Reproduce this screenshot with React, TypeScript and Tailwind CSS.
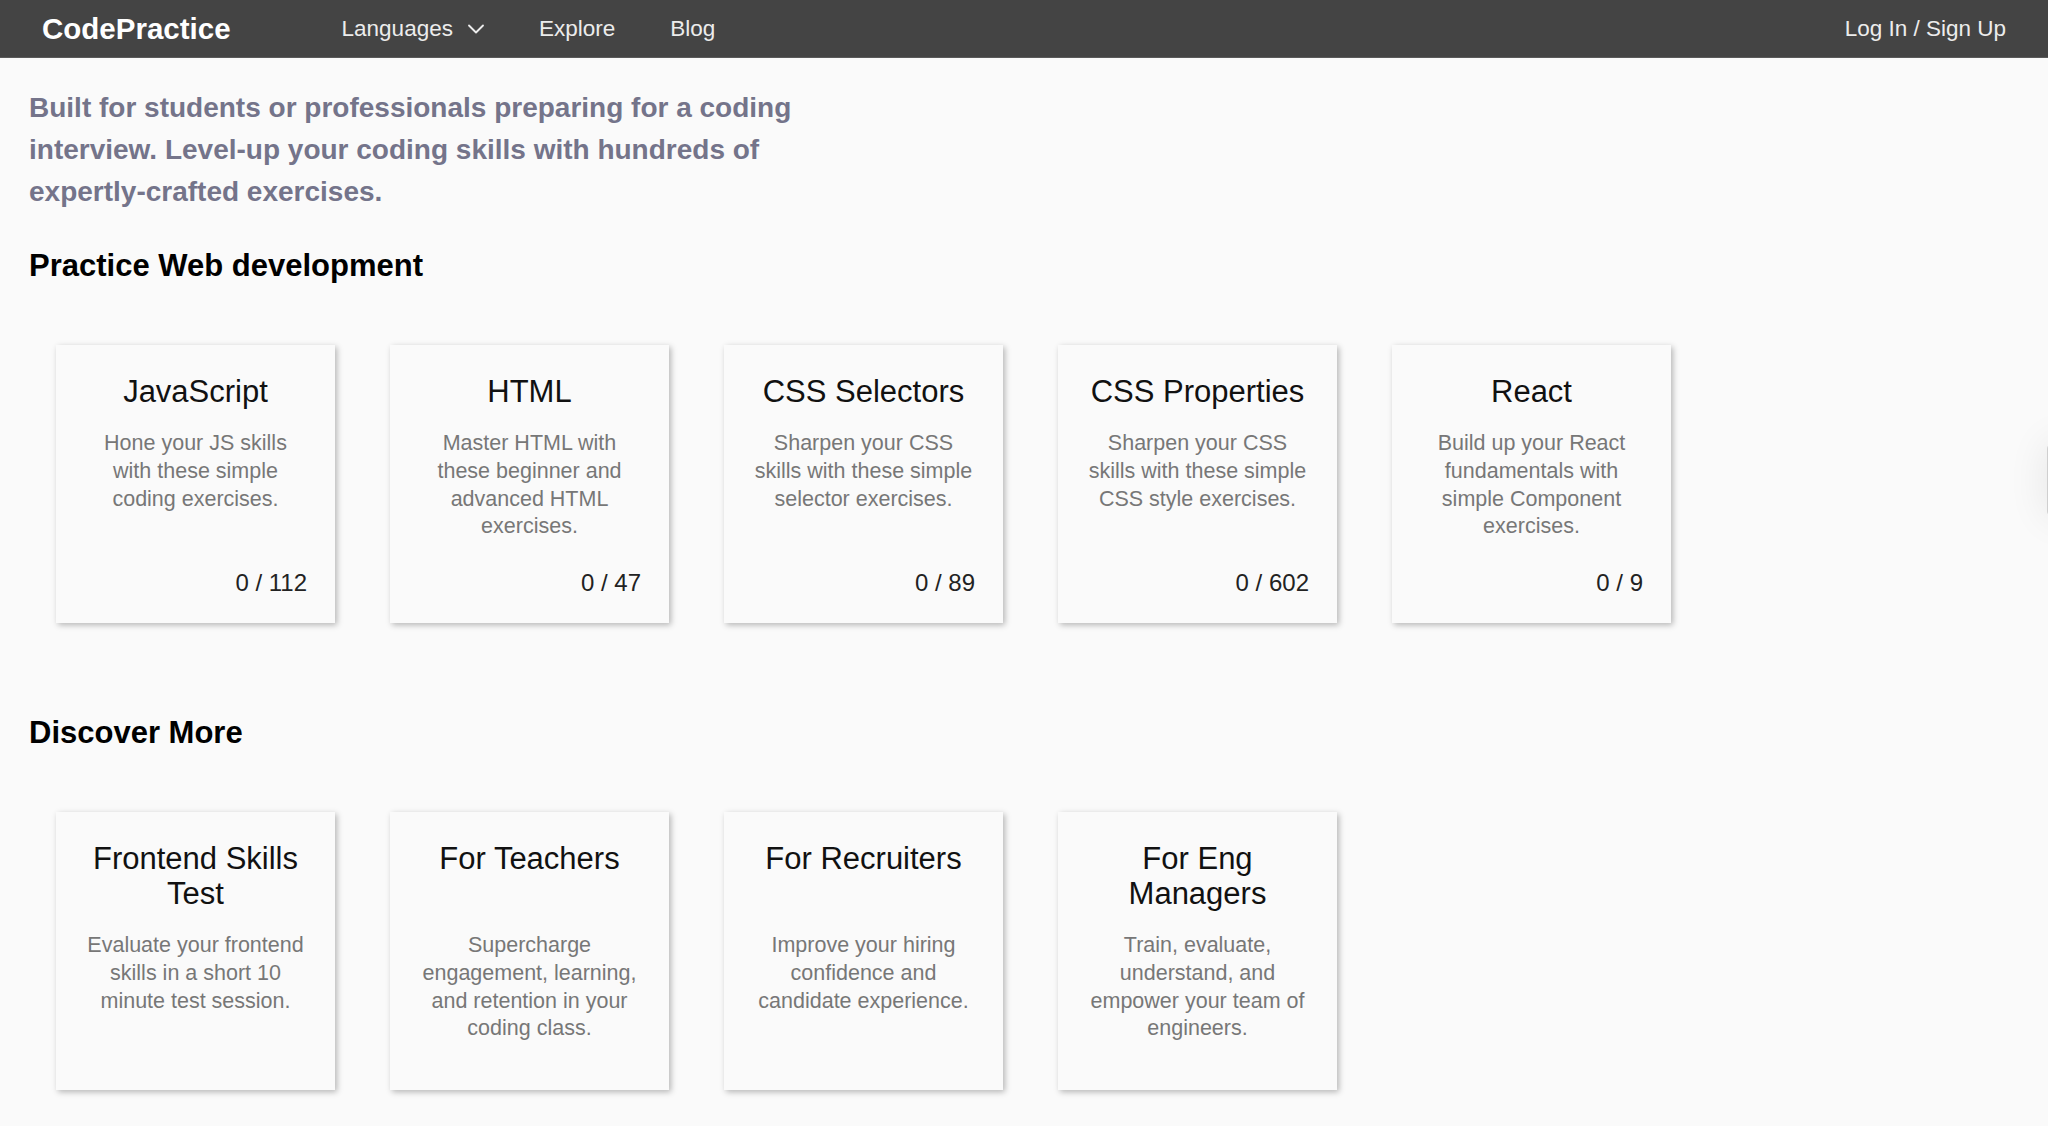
import React from "react";
import { ChevronDown } from "lucide-react";

type Card = { title: string[]; desc: string[]; count?: string };

const practice: Card[] = [
  { title: ["JavaScript"], desc: ["Hone your JS skills", "with these simple", "coding exercises."], count: "0 / 112" },
  { title: ["HTML"], desc: ["Master HTML with", "these beginner and", "advanced HTML", "exercises."], count: "0 / 47" },
  { title: ["CSS Selectors"], desc: ["Sharpen your CSS", "skills with these simple", "selector exercises."], count: "0 / 89" },
  { title: ["CSS Properties"], desc: ["Sharpen your CSS", "skills with these simple", "CSS style exercises."], count: "0 / 602" },
  { title: ["React"], desc: ["Build up your React", "fundamentals with", "simple Component", "exercises."], count: "0 / 9" },
];

const discover: Card[] = [
  { title: ["Frontend Skills", "Test"], desc: ["Evaluate your frontend", "skills in a short 10", "minute test session."] },
  { title: ["For Teachers"], desc: ["Supercharge", "engagement, learning,", "and retention in your", "coding class."] },
  { title: ["For Recruiters"], desc: ["Improve your hiring", "confidence and", "candidate experience."] },
  { title: ["For Eng", "Managers"], desc: ["Train, evaluate,", "understand, and", "empower your team of", "engineers."] },
];

function CardView({ card, twoLineTitle }: { card: Card; twoLineTitle?: boolean }) {
  return (
    <div className="w-[279px] h-[278px] shrink-0 bg-[#fafafa] shadow-[2px_2px_6px_rgba(0,0,0,0.28)] flex flex-col items-center pt-[29px] text-center">
      <div
        className={
          "px-4 text-[31px] leading-[35px] text-[#111] whitespace-nowrap " +
          (twoLineTitle ? "min-h-[70px]" : "")
        }
      >
        {card.title.map((t, i) => (
          <div key={i}>{t}</div>
        ))}
      </div>
      <div className="mt-[21px] text-[21.5px] leading-[27.8px] text-[#777] whitespace-nowrap">
        {card.desc.map((d, i) => (
          <div key={i}>{d}</div>
        ))}
      </div>
      {card.count && (
        <div className="mt-auto self-stretch text-right pr-[28px] pb-[26px] text-[24px] leading-[28px] text-[#222]">
          {card.count}
        </div>
      )}
    </div>
  );
}

export default function App() {
  return (
    <div className="relative min-h-screen overflow-hidden bg-[#fafafa] font-['Liberation_Sans',Arial,sans-serif]">
      <header className="h-[58px] bg-[#444444] flex items-center px-[42px] border-b border-[#5a5a5a]">
        <div className="text-[29.5px] font-bold text-white leading-none">CodePractice</div>
        <nav className="ml-[111px] flex items-center gap-[55px] text-[22.5px] text-[#ececec]">
          <div className="flex items-center">
            <span>Languages</span>
            <ChevronDown className="ml-[9px] w-[28px] h-[28px]" strokeWidth={1.6} />
          </div>
          <span className="-ml-[6px]">Explore</span>
          <span>Blog</span>
        </nav>
        <div className="ml-auto text-[22.5px] text-[#ececec]">Log In / Sign Up</div>
      </header>

      <main className="px-[29px]">
        <p className="mt-[29px] max-w-[820px] text-[28px] leading-[42px] font-bold text-[#74748a]">
          Built for students or professionals preparing for a coding interview. Level-up your coding skills with hundreds of expertly-crafted exercises.
        </p>

        <h2 className="mt-[34px] text-[31px] leading-[37px] font-bold text-black">Practice Web development</h2>
        <div className="mt-[61px] pl-[27px] flex gap-[55px]">
          {practice.map((c, i) => (
            <CardView key={i} card={c} />
          ))}
        </div>

        <h2 className="mt-[91px] text-[31px] leading-[37px] font-bold text-black">Discover More</h2>
        <div className="mt-[61px] pl-[27px] flex gap-[55px] pb-10">
          {discover.map((c, i) => (
            <CardView key={i} card={c} twoLineTitle />
          ))}
        </div>
      </main>

      <div className="absolute left-[2047px] top-[443px] w-[40px] h-[74px] rounded-l-md border-l border-[#cfcfcf] bg-[#fafafa] shadow-[0_0_40px_rgba(0,0,0,0.09)]" />
    </div>
  );
}
